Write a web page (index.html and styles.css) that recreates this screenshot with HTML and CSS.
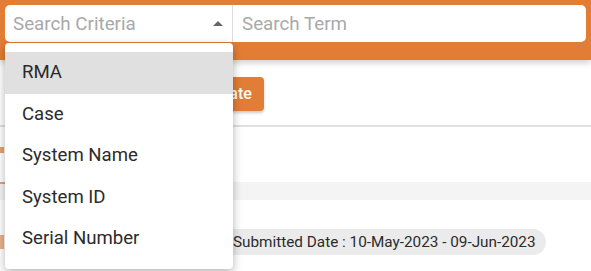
FILE: index.html
```html
<!doctype html>
<html lang="en">
<head>
    <meta charset="UTF-8">
    <title>RMA Search</title>
    <link rel="stylesheet" href="styles.css">
</head>
<body>
<!-- search bar -->
<div class="search-bar">
    <div class="search-group">
        <div class="criteria">
            <span class="placeholder">Search Criteria</span>
            <span class="caret"></span>
        </div>
        <div class="term">
            <span class="placeholder">Search Term</span>
        </div>
    </div>
</div>

<!-- page content behind the menu -->
<div class="content">
    <div class="actions">
        <span class="btn">Generate</span>
    </div>
    <div class="section">
        <span class="tick"></span>
    </div>
    <div class="band">
        <span class="band-edge"></span>
    </div>
    <div class="chips">
        <span class="mark"></span>
        <span class="chip">Submitted Date : 10-May-2023 - 09-Jun-2023</span>
    </div>
</div>

<!-- open criteria menu -->
<ul class="menu">
    <li class="active">RMA</li>
    <li>Case</li>
    <li>System Name</li>
    <li>System ID</li>
    <li>Serial Number</li>
</ul>
</body>
</html>
```
FILE: styles.css
```css
* {
    margin: 0;
    padding: 0;
    box-sizing: border-box;
}

body {
    font-family: Roboto, "Liberation Sans", sans-serif;
    background: #fff;
    color: #333;
    width: 591px;
    height: 271px;
    overflow: hidden;
    position: relative;
}

.search-bar {
    background: #e27d36;
    padding: 5px 5px 18px;
    box-shadow: 0 3px 6px rgba(0, 0, 0, 0.18);
    position: relative;
    z-index: 1;
}

.search-group {
    display: flex;
    height: 37px;
    background: #fff;
    border-radius: 5px;
}

.criteria {
    width: 228px;
    display: flex;
    align-items: center;
    justify-content: space-between;
    padding: 0 9px 0 8px;
    border-right: 1px solid #dcdcdc;
}

.term {
    flex: 1;
    display: flex;
    align-items: center;
    padding: 0 9px;
}

.placeholder {
    font-size: 18.8px;
    color: #a9a9a9;
}

.caret {
    width: 0;
    height: 0;
    border-left: 5px solid transparent;
    border-right: 5px solid transparent;
    border-bottom: 5px solid #666;
}

.content {
    padding-top: 17px;
}

.actions {
    height: 50px;
    padding-left: 175px;
    border-bottom: 2px solid #e0e0e0;
}

.btn {
    display: inline-block;
    height: 34px;
    line-height: 34px;
    padding: 0 12px;
    background: #e27d36;
    color: #fff;
    font-size: 16px;
    font-weight: 500;
    border-radius: 4px;
    box-shadow: 0 2px 3px rgba(0, 0, 0, 0.2);
}

.section {
    height: 55px;
    padding: 20px 0 0 0;
}

.tick {
    display: block;
    width: 4px;
    height: 6px;
    background: #e8a070;
}

.band {
    height: 18px;
    background: #f4f4f4;
}

.band-edge {
    display: block;
    width: 5px;
    height: 2px;
    background: #e8a070;
}

.chips {
    display: flex;
    align-items: center;
    padding: 29px 0 0 0;
}

.mark {
    width: 4px;
    height: 14px;
    background: #eab08a;
}

.chip {
    margin-left: 36px;
    height: 26px;
    line-height: 26px;
    padding: 0 10px 0 193px;
    background: #ebebeb;
    border-radius: 13px;
    font-size: 15.3px;
    color: #2b2b2b;
}

.menu {
    list-style: none;
    position: absolute;
    left: 5px;
    top: 43px;
    width: 228px;
    padding: 9px 0;
    background: #fff;
    border-radius: 4px;
    box-shadow: 0 3px 10px rgba(0, 0, 0, 0.3);
    z-index: 2;
}

.menu li {
    height: 41.5px;
    line-height: 41.5px;
    padding-left: 17px;
    font-size: 18.6px;
    color: #2b2b2b;
}

.menu .active {
    background: #e0e0e0;
}
```
